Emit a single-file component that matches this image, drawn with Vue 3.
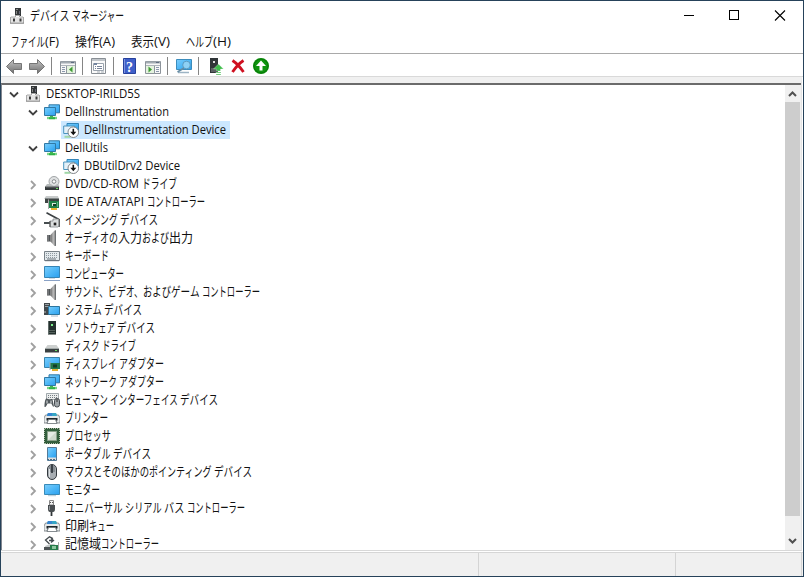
<script setup>
import { h } from 'vue'

const Label = (props) => {
  const total = props.runs.reduce((s, r) => s + r[1], 0)
  let x = 0
  return h('svg', { class: 'label', width: total, height: 18 }, [
    h('text', { y: 13 }, props.runs.map(([t, w]) => {
      const latin = t.charCodeAt(0) < 128
      const el = h('tspan', { x, class: latin ? 'latin' : 'kana', textLength: w, lengthAdjust: 'spacingAndGlyphs' }, t)
      x += w
      return el
    })),
  ])
}
Label.props = ['runs']

const title = [['デバイス ', 42], ['マネージャー', 52]]
const menus = [
  [['ファイル', 34], ['(F)', 14]],
  [['操作', 24], ['(A)', 16]],
  [['表示', 23], ['(V)', 16]],
  [['ヘルプ', 27], ['(H)', 18]],
]

const rows = [
  { level: 0, open: true, icon: 'pc', runs: [['DESKTOP-IRILD5S', 94]] },
  { level: 1, open: true, icon: 'net', runs: [['DellInstrumentation', 104]] },
  { level: 2, leaf: true, selected: true, icon: 'down', runs: [['DellInstrumentation Device', 142]] },
  { level: 1, open: true, icon: 'net', runs: [['DellUtils', 43]] },
  { level: 2, leaf: true, icon: 'down', runs: [['DBUtilDrv2 Device', 96]] },
  { level: 1, icon: 'dvd', runs: [['DVD/CD-ROM ', 77], ['ドライブ', 35]] },
  { level: 1, icon: 'ide', runs: [['IDE ATA/ATAPI ', 82], ['コントローラー', 58]] },
  { level: 1, icon: 'camera', runs: [['イメージング ', 55], ['デバイス', 38]] },
  { level: 1, icon: 'speaker', runs: [['オーディオの', 53], ['入力', 24], ['および', 27], ['出力', 24]] },
  { level: 1, icon: 'keyboard', runs: [['キーボード', 44]] },
  { level: 1, icon: 'computer', runs: [['コンピューター', 59]] },
  { level: 1, icon: 'speaker', runs: [['サウンド、', 43], ['ビデオ、', 35], ['および', 28], ['ゲーム ', 31], ['コントローラー', 58]] },
  { level: 1, icon: 'system', runs: [['システム ', 39], ['デバイス', 38]] },
  { level: 1, icon: 'software', runs: [['ソフトウェア ', 52], ['デバイス', 38]] },
  { level: 1, icon: 'disk', runs: [['ディスク ', 37], ['ドライブ', 34]] },
  { level: 1, icon: 'display', runs: [['ディスプレイ ', 54], ['アダプター', 45]] },
  { level: 1, icon: 'net', runs: [['ネットワーク ', 54], ['アダプター', 45]] },
  { level: 1, icon: 'hid', runs: [['ヒューマン ', 45], ['インターフェイス ', 70], ['デバイス', 38]] },
  { level: 1, icon: 'printer', runs: [['プリンター', 43]] },
  { level: 1, icon: 'cpu', runs: [['プロセッサ', 46]] },
  { level: 1, icon: 'portable', runs: [['ポータブル ', 48], ['デバイス', 38]] },
  { level: 1, icon: 'mouse', runs: [['マウスとそのほかの', 84], ['ポインティング ', 65], ['デバイス', 38]] },
  { level: 1, icon: 'monitor', runs: [['モニター', 35]] },
  { level: 1, icon: 'usb', runs: [['ユニバーサル ', 60], ['シリアル ', 39], ['バス ', 23], ['コントローラー', 58]] },
  { level: 1, icon: 'printer', runs: [['印刷', 24], ['キュー', 25]] },
  { level: 1, icon: 'storage', runs: [['記憶域', 36], ['コントローラー', 58]] },
]
</script>

<template>
  <svg class="defs" width="0" height="0">
    <defs>
      <linearGradient id="blue" x1="0" y1="0" x2="1" y2="1">
        <stop offset="0" stop-color="#7ccdfb" /><stop offset=".5" stop-color="#4fb8f7" /><stop offset="1" stop-color="#2a9fee" />
      </linearGradient>
      <linearGradient id="grey" x1="0" y1="0" x2="0" y2="1">
        <stop offset="0" stop-color="#c4c4c4" /><stop offset="1" stop-color="#707070" />
      </linearGradient>
      <linearGradient id="cone" x1="0" y1="0" x2="1" y2="0">
        <stop offset="0" stop-color="#666" /><stop offset=".5" stop-color="#bbb" /><stop offset="1" stop-color="#777" />
      </linearGradient>
      <symbol id="pc" viewBox="0 0 16 16">
        <path d="M6 0h6v8H6z" fill="#333739" /><path d="M7 1h2v1H7zM7 3h1v3H7z" fill="#888" /><path d="M10 3h1v3h-1z" fill="#667" />
        <path d="M6.500 7.500h4v2h-4z" fill="#fff" stroke="#aaa" />
        <path d="M2 9h12v6H2z" fill="#e4e4e4" /><path d="M1.500 9v6M14.500 9v6M2 9h4M11 9h3" stroke="#aaa" />
        <path d="M4 10.500h2v3H4zM10.500 10.500h2v3h-2z" fill="#3c3c3c" /><path d="M1 15.200h14" stroke="#808080" />
      </symbol>
      <symbol id="net" viewBox="0 0 16 16">
        <path d="M5 .800h10.500v8H5z" fill="url(#blue)" stroke="#3079a5" />
        <path d="M.500 3.500h11v8H.500z" fill="url(#blue)" stroke="#3079a5" />
        <path d="M6 12h3v2H6z" fill="#35b04a" /><path d="M3 14h10" stroke="#7bd487" stroke-width="2.400" /><path d="M5 14.200h6" stroke="#2eb145" stroke-width="2" />
      </symbol>
      <symbol id="down" viewBox="0 0 16 16">
        <path d="M4 1.500h11.500v7H4z" fill="url(#blue)" stroke="#3385b8" />
        <path d="M.700 4h11v7.500H.700z" fill="#e4f1f9" stroke="#4a94be" />
        <path d="M1.500 14.800h6" stroke="#a1d8a7" stroke-width="2" />
        <circle cx="10.300" cy="10.200" r="5.300" fill="#fff" stroke="#808488" />
        <path d="M10.300 6.800v4" stroke="#111" stroke-width="1.600" /><path d="M7.300 9.800h6l-3 3.400z" fill="#111" />
      </symbol>
      <symbol id="dvd" viewBox="0 0 16 16">
        <circle cx="10" cy="5.500" r="5" fill="#dfe1e2" stroke="#a0a4a6" /><circle cx="10" cy="5.500" r="1.800" fill="#fff" stroke="#85898c" />
        <path d="M3 8h4q3 4 6 0h1l1.500 2.500H1z" fill="#b5b9ba" /><path d="M1 10.500h14V14H1z" fill="#34393b" /><path d="M2 10.800h12" stroke="#898e8f" /><path d="M12 12h2v1h-2z" fill="#6cdb62" />
      </symbol>
      <symbol id="ide" viewBox="0 0 16 16">
        <path d="M2 2h12l1 3H0z" fill="#c8cbcb" /><path d="M1 4.500h14V9H1z" fill="#3f4544" />
        <path d="M5 7h10v7H5z" fill="#1e8048" /><path d="M8 9h4v3H8z" fill="#dcebdc" /><path d="M9 10h3v2H9z" fill="#123f28" /><path d="M4.500 5.500V15" stroke="#aaa" />
        <path d="M7 15h6" stroke="#e9b62f" stroke-width="2" /><path d="M13.500 8v5" stroke="#62b584" />
      </symbol>
      <symbol id="camera" viewBox="0 0 16 16">
        <path d="M2.500 0.800L15 7.500" stroke="#3a3f42" stroke-width="1.600" /><path d="M0 10h7v2H0z" fill="#474d50" />
        <path d="M6 9h3V7h6v7l-1 1H6z" fill="#dadddd" stroke="#83888b" stroke-width=".8" /><path d="M15.300 7v8" stroke="#444" />
        <circle cx="11" cy="12" r="1.900" fill="#222" stroke="#fff" stroke-width=".6" /><path d="M6 9v6" stroke="#444" />
      </symbol>
      <symbol id="speaker" viewBox="0 0 16 16">
        <path d="M3 5h3.500v6.500H3z" fill="#4e5356" /><path d="M6.500 5l4-4.500h1.500v15.500h-1.500l-4-4.500z" fill="url(#cone)" /><path d="M11.500 .500v15" stroke="#6d7173" /><path d="M4 5v6.500" stroke="#999" />
      </symbol>
      <symbol id="keyboard" viewBox="0 0 16 16">
        <path d="M.500 3.500h15v9H.500z" fill="#e3e9ed" stroke="#788188" /><path d="M2 5.500h12M2 7.500h12M2 9.500h12" stroke="#8d989f" stroke-dasharray="1 1" /><path d="M3 11h9M1 12.700h14" stroke="#68727a" />
      </symbol>
      <symbol id="computer" viewBox="0 0 16 16">
        <path d="M.500 .500h15v11H.500z" fill="url(#blue)" stroke="#3685b5" /><path d="M5 12h6v1H5z" fill="#d0dae2" /><path d="M0 14.500h16" stroke="#8aa2c6" />
      </symbol>
      <symbol id="system" viewBox="0 0 16 16">
        <path d="M0 1h6v12H0z" fill="#42484c" /><path d="M1 2.500h4M1 4.500h4" stroke="#9aa2a6" /><path d="M4.500 4.500h11v8h-11z" fill="url(#blue)" stroke="#2d769f" /><path d="M7 14h7" stroke="#a7bac9" /><path d="M1 9v2" stroke="#bbb" />
      </symbol>
      <symbol id="software" viewBox="0 0 16 16">
        <path d="M4 1h8v13H4z" fill="#23302d" /><path d="M7 4h2v2H7z" fill="#7cf08a" /><path d="M5 10.500h6M5 12.500h6" stroke="#54605c" /><path d="M4.500 1v13" stroke="#606b68" /><path d="M4 14.500h8" stroke="#858b89" />
      </symbol>
      <symbol id="disk" viewBox="0 0 16 16">
        <path d="M3.500 7h9l2.500 3.500H1z" fill="#cdd0cf" /><path d="M1 10h14v4.500H1z" fill="#3a4041" /><path d="M1 10.500h14" stroke="#a3a9a8" /><path d="M11 12.500h2" stroke="#65dc63" />
      </symbol>
      <symbol id="display" viewBox="0 0 16 16">
        <path d="M.500 1.500h15v10H.500z" fill="url(#blue)" stroke="#3a82a9" /><path d="M6 7h10v6H6z" fill="#24794c" /><path d="M9 8.500h4v3H9z" fill="#123c28" /><path d="M6 6v8" stroke="#a4aeb1" /><path d="M8 14h6" stroke="#e4b02e" stroke-width="2" />
      </symbol>
      <symbol id="hid" viewBox="0 0 16 16">
        <path d="M2.500 1.500h12v6h-12z" fill="#eceeee" stroke="#8c9499" stroke-width=".8" /><path d="M4 3.500h10M4 5.500h10" stroke="#747d83" stroke-dasharray="1 1" />
        <path d="M.500 15c0-4 .5-8 2-8.500 1.500 0 1.500 1 3 1s2-1 3 0l1.500 7c-1.500 1-2-3-3-3h-3c-1 0-1.500 4-3.500 3.500z" fill="#50575b" />
        <path d="M3 8.500v3M7 8.500v3" stroke="#e4e8ea" /><rect x="10.500" y="6.500" width="5" height="8.500" rx="2.300" fill="#9da3a7" stroke="#44494e" /><path d="M13 7v3" stroke="#333" />
      </symbol>
      <symbol id="printer" viewBox="0 0 16 16">
        <path d="M4 3h4v3H3z" fill="#2e83cf" /><path d="M7 3h5l1 3H7z" fill="#2fb9a0" />
        <path d="M1.500 5h13L16 8v5h-3l-1-3H4l-1 3H0V8z" fill="#e6e9ea" stroke="#6d757a" stroke-width=".8" />
        <path d="M4 3h8l1 3H3z" fill="#35a5c4" /><path d="M4 3h4v3H3z" fill="#3684d0" />
        <path d="M2.500 8h11v2.500h-11z" fill="#20272b" /><path d="M4.500 9.500h7l1.500 4H3z" fill="#fff" stroke="#666e73" stroke-width=".8" />
      </symbol>
      <symbol id="cpu" viewBox="0 0 16 16">
        <path d="M.500 .500h15v15H.500z" fill="#335f3d" stroke="#2b5034" /><path d="M1 .500h15M1 15.500h15M.500 1v15M15.500 1v15" stroke="#a9bda4" stroke-dasharray="1 1" />
        <path d="M3.500 3.500h9v9h-9z" fill="#e6ebe5" stroke="#8da38c" /><path d="M4 12l8-8v8z" fill="#cfd9cd" />
      </symbol>
      <symbol id="portable" viewBox="0 0 16 16">
        <path d="M3.500 1.500h9v13h-9z" fill="#ddd" stroke="#537a98" /><path d="M4 2h8v9.500H4z" fill="url(#blue)" /><path d="M3 13.500h10" stroke="#4e6b80" stroke-dasharray="2 1" />
      </symbol>
      <symbol id="mouse" viewBox="0 0 16 16">
        <rect x="3.500" y=".500" width="9" height="15" rx="4.500" fill="#a7adb2" stroke="#33393e" /><path d="M5 8V4q0-2 1.500-3h3Q11 2 11 4v4z" fill="#858c92" /><path d="M8 1v8" stroke="#282f35" stroke-width="1.600" /><path d="M5.500 5v8" stroke="#dce0e2" />
      </symbol>
      <symbol id="monitor" viewBox="0 0 16 16">
        <path d="M.500 2.500h15v10H.500z" fill="url(#blue)" stroke="#398bb9" /><path d="M4 13.700h8" stroke="#b2c7d2" />
      </symbol>
      <symbol id="usb" viewBox="0 0 16 16">
        <path d="M5.500 .500h4V5h-4z" fill="#f4f4f4" stroke="#888" /><path d="M6.500 2v1M8.500 2v1" stroke="#555" /><path d="M4 5h7v4q0 3-2 3H6q-2 0-2-3z" fill="#484d50" /><path d="M5.500 6v4" stroke="#92979a" /><path d="M7.500 12v4" stroke="#303538" stroke-width="1.800" />
      </symbol>
      <symbol id="storage" viewBox="0 0 16 16">
        <path d="M9 2.500L5.500 .800 1.500 4l4 4M5 4.500h4M7 2.500l2.500 2L7 6.500" fill="none" stroke="#454b4f" stroke-width="1.300" />
        <path d="M1 10l5-2h4l5 3v3H1z" fill="#c2c7c7" /><path d="M0 11h7v3H0z" fill="#4d5355" /><path d="M6 9h9v5H6z" fill="#267c49" /><path d="M8 10h4v3H8z" fill="#8dc69f" /><path d="M14.500 6v9" stroke="#aaa" />
      </symbol>
    </defs>
  </svg>

  <div class="window">
    <header class="titlebar">
      <svg class="icon"><use href="#pc" /></svg>
      <Label :runs="title" />
      <div class="controls">
        <svg width="46" height="29"><path d="M18 14.500h10" /></svg>
        <svg width="46" height="29"><path d="M17.500 9.500h9v9h-9z" /></svg>
        <svg width="45" height="29" class="close"><path d="M17 9.500l10 10M27 9.500l-10 10" /></svg>
      </div>
    </header>

    <nav class="menubar">
      <Label v-for="(m, i) in menus" :key="i" :runs="m" />
    </nav>

    <div class="toolbar">
      <svg width="280" height="22" viewBox="0 54 280 22">
        <g stroke="#757575" fill="url(#grey)" stroke-linejoin="round">
          <path d="M6.500 66.500l7-7v4h8v6h-8v4z" /><path d="M44.500 66.500l-7-7v4h-8v6h8v4z" />
        </g>
        <path d="M51.500 57v18M82.500 57v18M113.500 57v18M167.500 57v18M198.500 57v18" stroke="#858585" />
        <g v-for="x in [60, 145]" :key="x" :transform="`translate(${x} 61)`">
          <path d="M.500 .500h15v12H.500z" fill="#f8f8f8" stroke="#8c939a" /><path d="M1 1.500h14" stroke="#a3abb2" stroke-width="2" /><path d="M11 1.500h3" stroke="#5e6c80" />
          <path d="M1 4.500h14" stroke="#aeb4ba" />
          <g v-if="x === 60">
            <path d="M6.500 5v8" stroke="#8e969e" /><path d="M2 6.500h3M2 8.500h3M2 10.500h3" stroke="#8b98ac" />
            <path d="M7 5h8v7H7z" fill="#e5f3df" /><path d="M12.500 5.500v6L9 8.500z" fill="#3d9a32" />
          </g>
          <g v-else>
            <path d="M9.500 5v8" stroke="#8e969e" /><path d="M11 6.500h3M11 8.500h3M11 10.500h3" stroke="#8b98ac" />
            <path d="M1 5h8v7H1z" fill="#e5f3df" /><path d="M3.500 5.500v6L7 8.500z" fill="#3d9a32" />
          </g>
        </g>
        <path d="M91.500 58.500h14v15h-14z" fill="#fafafa" stroke="#898f95" /><path d="M92 60h13" stroke="#c0c5ca" stroke-width="2" />
        <path d="M93.500 63.500h10v7h-10z" fill="#fff" stroke="#9ba4ae" /><path d="M94 64h3" stroke="#7485a0" stroke-width="2" /><path d="M95 66.500h1M97 66.500h5M95 68.500h1M97 68.500h5" stroke="#778399" /><path d="M97 72h3M101 72h3" stroke="#a4acb4" />
        <path d="M123.500 58.500h12v15h-12z" fill="#3f5fc9" stroke="#26409c" /><path d="M124.500 59v14" stroke="#7d93e0" />
        <text class="help" x="126" y="71.500">?</text>
        <path d="M176.500 59.500h15v10h-15z" fill="url(#blue)" stroke="#3c8dbd" /><path d="M178 72.500h11" stroke="#9db4c4" stroke-width="1.500" />
        <circle cx="186.500" cy="65" r="3.800" fill="#8ed1f5" stroke="#5c9cc2" /><path d="M184 68l-6.500 4" stroke="#668ca3" stroke-width="1.600" />
        <path d="M210 58h8v15h-8z" fill="#303638" /><path d="M213 61h2v2h-2z" fill="#ddd" /><path d="M211 69h5M211 71h5" stroke="#858b8d" />
        <path d="M218.500 64l5 5h-3v2h-4v-2h-3zM216 72h5v1h-5zM216 74h5v1h-5z" fill="#3fbd4b" stroke="#fff" stroke-width=".3" />
        <path d="M232.500 60.500q6 4 11 11.500M243.500 60.500q-6 4-11 11.500" fill="none" stroke="#cf1020" stroke-width="2.800" />
        <circle cx="261" cy="66" r="8" fill="#0f950f" /><circle cx="261" cy="66" r="7" fill="none" stroke="#087708" />
        <path d="M261 60.500l5 5.500h-3.500v4.500h-3V66H256z" fill="#fff" />
      </svg>
    </div>

    <main class="pane">
      <div class="tree">
        <div v-for="(r, i) in rows" :key="i" class="row" :class="['level' + r.level, { selected: r.selected }]">
          <svg class="chevron" :class="{ open: r.open }" width="10" height="18">
            <path v-if="r.open" d="M1 7.500l4 4 4-4" />
            <path v-else-if="!r.leaf" d="M3 6l4 4-4 4" />
          </svg>
          <div class="item">
            <svg class="icon"><use :href="'#' + r.icon" /></svg>
            <Label :runs="r.runs" />
          </div>
        </div>
      </div>
      <div class="scrollbar">
        <svg width="15" height="17"><path d="M4 11l3.500-3.500L11 11" /></svg>
        <div class="thumb"></div>
        <svg width="15" height="17"><path d="M4 6l3.500 3.500L11 6" /></svg>
      </div>
    </main>

    <footer class="status">
      <div class="wide"></div>
      <div class="mid"></div>
      <div class="end"></div>
    </footer>
  </div>
</template>

<style>
body { margin: 0; overflow: hidden; }
</style>

<style scoped>
.defs { position: absolute; }
.window {
  box-sizing: border-box;
  width: 804px;
  height: 577px;
  border: 1px solid #26425a;
  background: #fff;
  display: flex;
  flex-direction: column;
  font: 12px "Open Sans", "Noto Sans CJK JP", sans-serif;
}
.window :deep(.label) {
  display: block;
  flex: none;
  overflow: visible;
  white-space: pre;
  fill: #111;
  font: 12px "Open Sans", "Noto Sans CJK JP", sans-serif;
}
.window :deep(.kana) { font-size: 13px; }
.icon { display: block; width: 16px; height: 16px; flex: none; }
.titlebar { display: flex; align-items: center; height: 29px; flex: none; padding-left: 8px; }
.titlebar .icon { margin-right: 5px; }
.controls { display: flex; margin-left: auto; }
.controls svg { fill: none; stroke: #000; shape-rendering: crispEdges; }
.controls .close { shape-rendering: auto; stroke-width: 1.1; }
.menubar { display: flex; gap: 16px; align-items: center; height: 23px; flex: none; padding-left: 10px; border-bottom: 1px solid #a9a9a9; }
.toolbar { height: 22px; flex: none; border-bottom: 1px solid #d9d9d9; }
.toolbar svg { display: block; margin-left: -1px; }
.help { font: bold 14px "Liberation Serif", serif; fill: #fff; }
.pane {
  display: flex;
  box-sizing: border-box;
  height: 474px;
  flex: none;
  border-top: 6px solid #f0f0f0;
  border-bottom: 1px solid #d8d8d8;
  border-right: 1px solid #e4e4e4;
  margin-right: 1px;
}
.tree { flex: 1; overflow: hidden; border-left: 1px solid #828790; border-top: 2px solid #6b6b6b; }
.row { display: flex; height: 18px; align-items: center; }
.level0 { padding-left: 7px; }
.level1 { padding-left: 26px; }
.level2 { padding-left: 45px; }
.chevron { display: block; flex: none; fill: none; stroke: #a0a0a0; stroke-width: 1.8; }
.chevron.open { stroke: #404040; }
.item { display: flex; align-items: center; height: 18px; gap: 5px; padding: 0 4px 0 2px; }
.level0 .item,
.level1 .item { padding-left: 6px; }
.level2 .item { margin-left: 4px; }
.selected .item { background: #cce8ff; }
.scrollbar { display: flex; flex-direction: column; width: 16px; background: #f0f0f0; border-top: 2px solid #6b6b6b; }
.scrollbar svg { display: block; flex: none; fill: none; stroke: #505050; stroke-width: 2; }
.thumb { width: 15px; height: 414px; background: #cdcdcd; margin-bottom: auto; }
.status { display: flex; flex: 1; background: #f0f0f0; border-top: 1px solid #d6d6d6; margin-top: 1px; }
.status div { border-right: 1px solid #d4d4d4; }
.wide { width: 477px; }
.mid { width: 196px; }
.end { width: 125px; }
</style>
